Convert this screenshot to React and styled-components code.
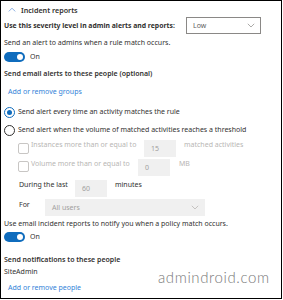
import React from "react";
import styled, { createGlobalStyle } from "styled-components";

const GlobalStyle = createGlobalStyle`
  html, body {
    margin: 0;
    padding: 0;
    background: #ffffff;
  }
  body {
    font-family: "Noto Sans", "Open Sans", sans-serif;
    color: #323130;
  }
`;

const Frame = styled.div`
  position: relative;
  box-sizing: border-box;
  width: 282px;
  height: 299px;
  border: 1px solid #000;
  padding: 0 0 0 3px;
  overflow: hidden;
  font-size: 7px;
  line-height: 10px;
`;

const Header = styled.div`
  display: flex;
  align-items: center;
  height: 15px;
  margin-top: 1px;
  padding-left: 4px;
  gap: 5px;
  font-weight: 600;
  font-size: 7.2px;
`;

const Row = styled.div`
  display: flex;
  align-items: ${(p) => (p.$top ? "flex-start" : "center")};
  height: ${(p) => p.$h || 10}px;
  margin-top: ${(p) => p.$mt || 0}px;
  padding-left: ${(p) => p.$pl || 0}px;
  gap: ${(p) => p.$gap || 0}px;
  white-space: nowrap;
`;

const Label = styled.span`
  font-weight: ${(p) => (p.$bold ? 700 : p.$semi ? 600 : 400)};
  font-size: ${(p) => (p.$bold ? "6.85px" : "inherit")};
  color: ${(p) => (p.$muted ? "#b8b6b4" : "#323130")};
  width: ${(p) => (p.$w ? `${p.$w}px` : "auto")};
  flex-shrink: 0;
  margin-left: ${(p) => p.$ml || 0}px;
  margin-top: ${(p) => p.$mt || 0}px;
`;

const Link = styled.span`
  color: #3182d8;
  padding-left: 4px;
`;

const Select = styled.div`
  box-sizing: border-box;
  display: flex;
  align-items: center;
  justify-content: space-between;
  width: ${(p) => p.$w}px;
  height: ${(p) => p.$h}px;
  padding: 0 5px 0 6px;
  border: 1px solid ${(p) => (p.$disabled ? "#f0f0f0" : "#8a8886")};
  background: ${(p) => (p.$disabled ? "#f0f0f0" : "#fff")};
  color: ${(p) => (p.$disabled ? "#a19f9d" : "#605e5c")};
  flex-shrink: 0;
`;

const NumBox = styled.div`
  box-sizing: border-box;
  display: flex;
  align-items: center;
  width: 32px;
  height: 17px;
  padding: 1px 0 0 7px;
  background: #f0f0f0;
  color: #a19f9d;
  flex-shrink: 0;
`;

const Toggle = styled.div`
  position: relative;
  box-sizing: border-box;
  width: 21px;
  height: 10px;
  border-radius: 5px;
  background: #0f6cbd;
  &::after {
    content: "";
    position: absolute;
    right: 2px;
    top: 2px;
    width: 6px;
    height: 6px;
    border-radius: 50%;
    background: #fff;
  }
`;

const Radio = styled.div`
  position: relative;
  box-sizing: border-box;
  width: 11px;
  height: 11px;
  border-radius: 50%;
  border: 1px solid ${(p) => (p.$on ? "#0f6cbd" : "#323130")};
  flex-shrink: 0;
  &::after {
    content: "";
    display: ${(p) => (p.$on ? "block" : "none")};
    position: absolute;
    left: 2px;
    top: 2px;
    width: 5px;
    height: 5px;
    border-radius: 50%;
    background: #0f6cbd;
  }
`;

const Check = styled.div`
  box-sizing: border-box;
  width: 11px;
  height: 11px;
  border: 1px solid #c8c6c4;
  border-radius: 2px;
  margin-left: 14px;
  margin-top: ${(p) => p.$mt || 3}px;
  flex-shrink: 0;
`;

const Watermark = styled.div`
  position: absolute;
  left: 157px;
  top: 269px;
  font-family: "Lato", "DejaVu Sans", sans-serif;
  font-weight: 300;
  font-size: 15px;
  line-height: 15px;
  letter-spacing: 0.6px;
  color: #7a7a7a;
`;

const Chevron = ({ up, color = "#8a8886", size = 8 }) => (
  <svg width={size} height={size * 0.6} viewBox="0 0 10 6" fill="none">
    <path
      d={up ? "M1 5.5 L5 1.5 L9 5.5" : "M1 1 L5 5 L9 1"}
      stroke={color}
      strokeWidth="0.9"
    />
  </svg>
);

export default function App() {
  return (
    <>
      <GlobalStyle />
      <Frame>
        <Header>
          <Chevron up color="#5c8fd6" size={8} />
          <span>Incident reports</span>
        </Header>
        <Row $h={17}>
          <Label $bold $w={182}>
            Use this severity level in admin alerts and reports:
          </Label>
          <Select $w={75} $h={17}>
            <span>Low</span>
            <Chevron />
          </Select>
        </Row>
        <Row $mt={4}>
          <Label>Send an alert to admins when a rule match occurs.</Label>
        </Row>
        <Row $mt={4} $gap={5}>
          <Toggle />
          <Label>On</Label>
        </Row>
        <Row $mt={7}>
          <Label $semi>Send email alerts to these people (optional)</Label>
        </Row>
        <Row $mt={8}>
          <Link>Add or remove groups</Link>
        </Row>
        <Row $h={12} $mt={9} $gap={3}>
          <Radio $on />
          <Label>Send alert every time an activity matches the rule</Label>
        </Row>
        <Row $h={12} $mt={6} $gap={3}>
          <Radio />
          <Label>Send alert when the volume of matched activities reaches a threshold</Label>
        </Row>
        <Row $h={17} $mt={4} $top>
          <Check $mt={3} />
          <Label $muted $ml={2} $w={113}>
            Instances more than or equal to
          </Label>
          <NumBox>15</NumBox>
          <Label $muted $ml={8}>matched activities</Label>
        </Row>
        <Row $h={17} $mt={2} $top>
          <Check $mt={2} />
          <Label $muted $ml={2} $w={107}>
            Volume more than or equal to
          </Label>
          <NumBox>0</NumBox>
          <Label $muted $ml={9}>MB</Label>
        </Row>
        <Row $h={17} $mt={4} $pl={15} $top>
          <Label $w={56}>During the last</Label>
          <NumBox>60</NumBox>
          <Label $ml={8}>minutes</Label>
        </Row>
        <Row $h={17} $mt={2} $pl={15} $top>
          <Label $w={26} $mt={1}>For</Label>
          <Select $w={160} $h={17} $disabled>
            <span>All users</span>
            <Chevron color="#b3b0ad" />
          </Select>
        </Row>
        <Row $mt={3}>
          <Label>Use email incident reports to notify you when a policy match occurs.</Label>
        </Row>
        <Row $mt={3} $gap={5}>
          <Toggle />
          <Label>On</Label>
        </Row>
        <Row $mt={13}>
          <Label $semi>Send notifications to these people</Label>
        </Row>
        <Row $mt={2}>
          <Label>SiteAdmin</Label>
        </Row>
        <Row $mt={6}>
          <Link>Add or remove people</Link>
        </Row>
        <Watermark>admindroid.com</Watermark>
      </Frame>
    </>
  );
}
